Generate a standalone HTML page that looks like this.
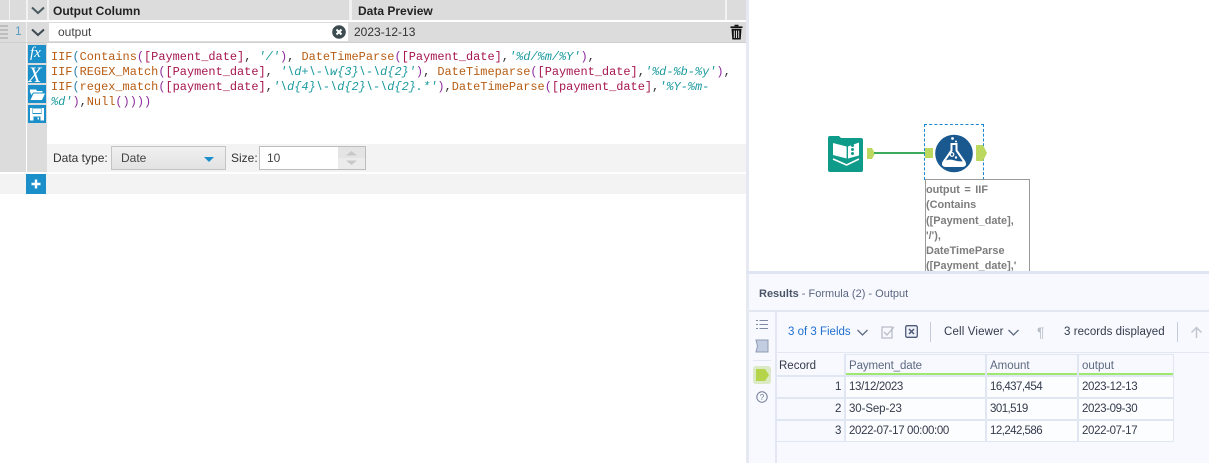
<!DOCTYPE html>
<html><head><meta charset="utf-8">
<style>
html,body{margin:0;padding:0;background:#fff}
#p{position:relative;width:1209px;height:463px;overflow:hidden;background:#fff;font-family:"Liberation Sans",sans-serif;font-size:12px;color:#222}
#p div,#p svg,#p span.a{position:absolute}
.t{white-space:nowrap}
.code{position:absolute;left:51px;top:50px;font-family:"Liberation Mono",monospace;font-size:11.93px;line-height:15px;white-space:pre;color:#333}
.f{color:#b85c12}.b{color:#2b7fae}.m{color:#8e2a9e}.r{color:#a5164e}.s{color:#1b9a9e;font-style:italic}
.btn{left:28px;width:18px;height:18px;background:#1a8fc9}
.c{font-size:11.500px;color:#333a4a;white-space:nowrap}
.d{letter-spacing:-.36px}.n{letter-spacing:-.55px}
</style></head><body><div id="p">

<div style="left:0;top:0;width:746px;height:20px;background:#dcdcdc"></div>
<div style="left:9px;top:0;width:1px;height:20px;background:#f2f2f2"></div>
<div style="left:26px;top:0;width:2px;height:20px;background:#f2f2f2"></div>
<div style="left:47px;top:0;width:2px;height:20px;background:#f2f2f2"></div>
<div style="left:349px;top:0;width:3px;height:20px;background:#f2f2f2"></div>
<div style="left:725px;top:0;width:2px;height:20px;background:#f2f2f2"></div>
<div class="t" style="left:53px;top:4px;font-weight:bold;font-size:12px;color:#222">Output Column</div>
<div class="t" style="left:358px;top:4px;font-weight:bold;font-size:12px;color:#222">Data Preview</div>
<svg style="left:31px;top:6px" width="14" height="9"><path d="M1 1.500L7 7L13 1.500" fill="none" stroke="#4a5a62" stroke-width="2"/></svg>

<div style="left:0;top:22px;width:746px;height:20px;background:#dcdcdc"></div>
<div style="left:26px;top:22px;width:1px;height:20px;background:#f2f2f2"></div>
<div style="left:0;top:42px;width:746px;height:1px;background:#cfcfcf"></div>
<div style="left:0;top:25px;width:8px;height:2px;background:#bdbdbd"></div>
<div style="left:0;top:29px;width:8px;height:2px;background:#bdbdbd"></div>
<div style="left:0;top:33px;width:8px;height:2px;background:#bdbdbd"></div>
<div style="left:0;top:37px;width:8px;height:2px;background:#bdbdbd"></div>
<div class="t" style="left:15px;top:24px;color:#5a9dbd;font-size:12px">1</div>
<svg style="left:31px;top:28px" width="14" height="9"><path d="M1 1.500L7 7L13 1.500" fill="none" stroke="#3c4a52" stroke-width="2"/></svg>
<div style="left:49px;top:23px;width:299px;height:18px;background:#fff"></div>
<div class="t" style="left:58px;top:25px;font-size:12px;color:#444">output</div>
<svg style="left:332px;top:25px" width="14" height="14"><circle cx="7" cy="7" r="6.800" fill="#3b4b4f"/><path d="M4.500 4.500L9.500 9.500M9.500 4.500L4.500 9.500" stroke="#fff" stroke-width="2"/></svg>
<div class="t" style="left:354px;top:25px;font-size:12px;color:#333">2023-12-13</div>
<svg style="left:730px;top:24px" width="13" height="16" viewBox="0 0 13 16"><path d="M4.500 1.500h4M.5 3.200h12" stroke="#111" stroke-width="1.600" fill="none"/><path d="M1.500 4.800h10l-.8 10.700h-8.400z" fill="#111"/><path d="M4.300 6.500v7.500M6.500 6.500v7.500M8.700 6.500v7.500" stroke="#dcdcdc" stroke-width="1"/></svg>

<div style="left:0;top:43px;width:26px;height:129px;background:#dcdcdc"></div>
<div style="left:27px;top:43px;width:20px;height:129px;background:#dcdcdc"></div>

<div class="btn" style="top:45px"></div>
<div class="t" style="left:30px;top:45px;font-family:'Liberation Serif',serif;font-style:italic;font-size:15px;color:#fff">fx</div>
<div class="btn" style="top:65px"></div>
<div class="t" style="left:28px;top:62px;font-family:'Liberation Serif',serif;font-style:italic;font-size:22px;color:#fff">X</div>
<div class="btn" style="top:85px"></div>
<svg style="left:28px;top:85px" width="18" height="18"><path d="M2 7V4.500h6l1 1.500h5.500v1.500H5L3.500 10z" fill="#fff"/><path d="M5.500 8.500H17l-3 6.500H2.500z" fill="#fff"/></svg>
<div class="btn" style="top:105px"></div>
<svg style="left:28px;top:105px" width="18" height="18"><path d="M2 3h14v12.500H2z" fill="#fff"/><rect x="4.500" y="3" width="9" height="6" fill="#1a8fc9"/><rect x="5" y="3.500" width="8" height="4.500" fill="#fff"/><rect x="5.500" y="11.500" width="7" height="4" fill="#1a8fc9"/><rect x="9.500" y="12.500" width="1.500" height="2" fill="#fff"/></svg>

<div class="code"><span class="f">IIF</span><span class="b">(</span><span class="f">Contains</span><span class="m">(</span><span class="r">[Payment_date]</span>, <span class="s">'/'</span><span class="m">)</span>, <span class="f">DateTimeParse</span><span class="m">(</span><span class="r">[Payment_date]</span>,<span class="s">'%d/%m/%Y'</span><span class="m">)</span>,
<span class="f">IIF</span><span class="b">(</span><span class="f">REGEX_Match</span><span class="m">(</span><span class="r">[Payment_date]</span>, <span class="s">'\d+\-\w{3}\-\d{2}'</span><span class="m">)</span>, <span class="f">DateTimeparse</span><span class="m">(</span><span class="r">[Payment_date]</span>,<span class="s">'%d-%b-%y'</span><span class="m">)</span>,
<span class="f">IIF</span><span class="b">(</span><span class="f">regex_match</span><span class="m">(</span><span class="r">[payment_date]</span>,<span class="s">'\d{4}\-\d{2}\-\d{2}.*'</span><span class="m">)</span>,<span class="f">DateTimeParse</span><span class="m">(</span><span class="r">[payment_date]</span>,<span class="s">'%Y-%m-</span>
<span class="s">%d'</span><span class="m">)</span>,<span class="f">Null</span><span class="m">())))</span></div>

<div style="left:47px;top:144px;width:699px;height:28px;background:#f3f3f3"></div>
<div class="t" style="left:53px;top:151px;font-size:12px;color:#333">Data type:</div>
<div style="left:111px;top:146px;width:113px;height:22px;border:1px solid #c4c4c4;background:linear-gradient(#f0f0f0,#e2e2e2)"></div>
<div class="t" style="left:121px;top:151px;font-size:12px;color:#444">Date</div>
<svg style="left:204px;top:157px" width="10" height="5"><path d="M0 0H10L5 5z" fill="#1a8fc9"/></svg>
<div class="t" style="left:231px;top:151px;font-size:12px;color:#333">Size:</div>
<div style="left:259px;top:146px;width:105px;height:22px;border:1px solid #bdbdbd;background:#fff"></div>
<div class="t" style="left:267px;top:151px;font-size:12px;color:#444">10</div>
<div style="left:338px;top:147px;width:27px;height:11px;background:#e4e4e4"></div>
<div style="left:338px;top:158px;width:27px;height:11px;background:#ebebeb"></div>
<svg style="left:345px;top:150px" width="13" height="16"><path d="M1 5.500L6.500 1L12 5.500z" fill="#c8c8c8"/><path d="M1 10.500H12L6.500 15z" fill="#c8c8c8"/></svg>

<div style="left:0;top:174px;width:746px;height:20px;background:#f3f3f3"></div>
<div style="left:26px;top:174px;width:20px;height:20px;background:#1a8fc9"></div>
<svg style="left:31px;top:179px" width="10" height="10"><path d="M5 0.500v9M.5 5h9" stroke="#fff" stroke-width="2.400"/></svg>

<div style="left:746px;top:0;width:3px;height:463px;background:#e6e9f2"></div>

<!-- canvas -->
<svg style="left:826px;top:133px" width="40" height="40" viewBox="0 0 40 40">
<path d="M2 5q0-2 2-2h9l2 2h20q2 0 2 2v30q0 2-2 2H4q-2 0-2-2z" fill="#0f9b8a"/>
<path d="M7 10l13.600 3.500v12L7 22z" fill="#fff"/>
<path d="M22 13.500L33 9.500v13L22 25.500z" fill="#fff"/>
<circle cx="26.500" cy="12.500" r="1.500" fill="#0f9b8a"/><circle cx="26.500" cy="16.500" r="1.500" fill="#0f9b8a"/><circle cx="26.500" cy="20.500" r="1.500" fill="#0f9b8a"/>
<path d="M7 26l13.600 6L33 26" fill="none" stroke="#fff" stroke-width="1.600"/>
</svg>
<svg style="left:866px;top:147px" width="11" height="13"><path d="M1 1h5l3 5.500-3 5.500H1z" fill="#bcd85f"/></svg>
<div style="left:874px;top:152px;width:52px;height:2px;background:#3cab5b"></div>
<div style="left:925px;top:148px;width:8px;height:10px;background:#bcd85f"></div>
<div style="left:924px;top:124px;width:58px;height:55px;border:1px dashed #1a86d0;border-bottom:none"></div>
<svg style="left:934px;top:133px" width="40" height="40" viewBox="0 0 40 40">
<circle cx="20" cy="20.500" r="18.800" fill="#19598f"/>
<path d="M16.500 11h7M17.500 11v6.500L9.500 29q-1.800 4 2.500 4h16q4.300 0 2.500-4L22.500 17.500V11" fill="#19598f" stroke="#fff" stroke-width="2"/>
<path d="M9.500 28.500q5-3 10.500-1.200t10.500.7q2 4.500-2.500 5H12q-4.500-.5-2.500-4.500z" fill="#fff"/>
<circle cx="18" cy="21.500" r="1.800" fill="none" stroke="#fff" stroke-width="1.200"/><circle cx="22" cy="24.500" r="1.200" fill="#fff"/>
<circle cx="18.500" cy="5.500" r="1.400" fill="#fff"/><circle cx="22" cy="8.500" r="1" fill="#fff"/>
</svg>
<svg style="left:975px;top:144px" width="13" height="18"><path d="M1 1h7l4 8-4 8H1z" fill="#bcd85f"/></svg>
<div style="left:925px;top:179px;width:103px;height:92px;border:1px solid #9a9a9a;border-bottom:none;background:#fff"></div>
<div style="left:926px;top:183px;font-weight:bold;font-size:10.900px;word-spacing:1.500px;line-height:15.300px;color:#7d7d7d;white-space:pre">output = IIF
(Contains
([Payment_date],
'/'),
DateTimeParse
([Payment_date],'</div>

<!-- results -->
<div style="left:749px;top:274px;width:460px;height:189px;background:#f7f9fe"></div>
<div style="left:746px;top:271px;width:463px;height:3px;background:#dfe5f2"></div>
<div class="t" style="left:759px;top:288px;font-size:11px;color:#5b6680"><b style="color:#4a5568">Results</b> - Formula (2) - Output</div>
<div style="left:749px;top:310px;width:460px;height:2px;background:#e2e7f2"></div>
<div style="left:775px;top:312px;width:2px;height:151px;background:#e2e7f2"></div>
<div style="left:777px;top:352px;width:432px;height:1px;background:#e2e7f2"></div>

<svg style="left:756px;top:319px" width="13" height="11"><path d="M3.500 1.500H12M3.500 5.500H12M3.500 9.500H12M0 1.500H2M0 5.500H2M0 9.500H2" stroke="#7f8ba5" stroke-width="1"/></svg>
<svg style="left:755px;top:339px" width="14" height="14"><path d="M1 1h12v12H1l1.500-6z" fill="#c3cde2" stroke="#8f9ab3"/></svg>
<div style="left:753px;top:360px;width:18px;height:1px;background:#e2e7f2"></div>
<div style="left:753px;top:366px;width:18px;height:18px;background:#dbe9c5;border-radius:3px"></div>
<svg style="left:756px;top:369px" width="14" height="12"><path d="M0 0H9L13 6 9 12H0z" fill="#b5d44a"/></svg>
<svg style="left:756px;top:391px" width="12" height="12"><circle cx="6" cy="6" r="5.200" fill="none" stroke="#6f7a92" stroke-width="1"/><text x="6" y="9" font-size="8" text-anchor="middle" fill="#6f7a92" font-family="Liberation Sans">?</text></svg>

<div class="t" style="left:788px;top:326px;font-size:11.500px;color:#1f6fd0">3 of 3 Fields</div>
<svg style="left:857px;top:329px" width="11" height="7"><path d="M.5 1L5.500 6L10.500 1" fill="none" stroke="#5c6880" stroke-width="1.300"/></svg>
<svg style="left:881px;top:325px" width="14" height="14"><path d="M1 2h10v11H1z" fill="none" stroke="#b9bdc6" stroke-width="1.300"/><path d="M3 7l3 3 7-8" fill="none" stroke="#b9bdc6" stroke-width="1.300"/></svg>
<svg style="left:905px;top:325px" width="13" height="13"><rect x=".7" y=".7" width="11.600" height="11.600" rx="1.500" fill="#eef1f8" stroke="#4e5a78" stroke-width="1.300"/><path d="M4 4l5 5M9 4l-5 5" stroke="#4e5a78" stroke-width="1.500"/></svg>
<div style="left:930px;top:322px;width:1px;height:20px;background:#c3cbdc"></div>
<div class="t" style="left:944px;top:326px;font-size:11.500px;letter-spacing:.15px;color:#333a4a">Cell Viewer</div>
<svg style="left:1008px;top:329px" width="11" height="7"><path d="M.5 1L5.500 6L10.500 1" fill="none" stroke="#5c6880" stroke-width="1.300"/></svg>
<div class="t" style="left:1037px;top:324px;font-size:14px;color:#b9bdc6">¶</div>
<div class="t" style="left:1064px;top:326px;font-size:11.500px;letter-spacing:.05px;color:#333a4a">3 records displayed</div>
<div style="left:1177px;top:322px;width:1px;height:20px;background:#c3cbdc"></div>
<svg style="left:1190px;top:326px" width="13" height="13"><path d="M6.500 12V1.500M1.500 6.500L6.500 1.500L11.500 6.500" fill="none" stroke="#c1c6d0" stroke-width="1.500"/></svg>

<!-- table -->
<div style="left:845px;top:376px;width:328px;height:65px;background:#fcfdff"></div>
<div style="left:777px;top:354px;width:396px;height:22px;background:#f7f9fe"></div>
<div style="left:846px;top:373px;width:327px;height:2px;background:#9fe870"></div>
<div style="left:775px;top:375px;width:399px;height:2px;background:#e0e6f2"></div>
<div style="left:775px;top:397px;width:399px;height:2px;background:#e0e6f2"></div>
<div style="left:775px;top:419px;width:399px;height:2px;background:#e0e6f2"></div>
<div style="left:775px;top:441px;width:399px;height:1px;background:#e0e6f2"></div>
<div style="left:845px;top:354px;width:329px;height:1px;background:#e0e6f2"></div>
<div style="left:844px;top:354px;width:2px;height:88px;background:#e0e6f2"></div>
<div style="left:985px;top:354px;width:2px;height:88px;background:#e0e6f2"></div>
<div style="left:1077px;top:354px;width:2px;height:88px;background:#e0e6f2"></div>
<div style="left:1173px;top:354px;width:1px;height:88px;background:#e0e6f2"></div>

<div class="c" style="left:779px;top:360px">Record</div>
<div class="c" style="left:849px;top:360px;color:#5d6880;letter-spacing:-.1px">Payment_date</div>
<div class="c" style="left:990px;top:360px;color:#5d6880">Amount</div>
<div class="c" style="left:1082px;top:360px;color:#5d6880">output</div>

<div class="c" style="left:835px;top:381px">1</div>
<div class="c d" style="left:849px;top:381px">13/12/2023</div>
<div class="c n" style="left:990px;top:381px">16,437,454</div>
<div class="c d" style="left:1082px;top:381px">2023-12-13</div>

<div class="c" style="left:835px;top:403px">2</div>
<div class="c" style="left:849px;top:403px;letter-spacing:-.1px">30-Sep-23</div>
<div class="c n" style="left:990px;top:403px">301,519</div>
<div class="c d" style="left:1082px;top:403px">2023-09-30</div>

<div class="c" style="left:835px;top:425px">3</div>
<div class="c d" style="left:849px;top:425px">2022-07-17 00:00:00</div>
<div class="c n" style="left:990px;top:425px">12,242,586</div>
<div class="c d" style="left:1082px;top:425px">2022-07-17</div>

</div></body></html>
